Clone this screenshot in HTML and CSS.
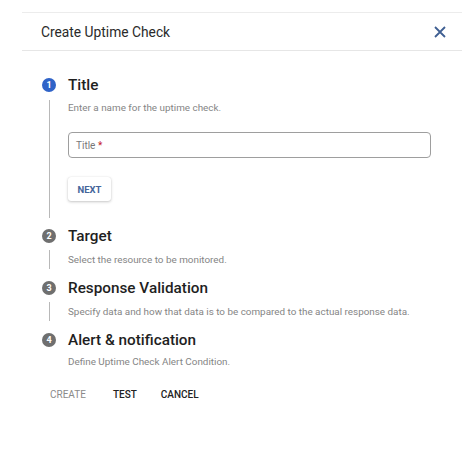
FILE: index.html
```html
<!DOCTYPE html>
<html>
<head>
<meta charset="utf-8">
<link rel="stylesheet" href="styles.css">
</head>
<body>
<div class="dialog">
  <div class="header">
    <span class="header-title">Create Uptime Check</span>
    <svg class="close" width="12" height="12" viewBox="0 0 12 12"><path d="M1 1L11 11M11 1L1 11" stroke="#3f5f92" stroke-width="1.8" fill="none"/></svg>
  </div>
  <div class="steps">
    <div class="step">
      <div class="step-head"><span class="num active">1</span><span class="step-title">Title</span></div>
      <div class="step-body line first">
        <div class="desc">Enter a name for the uptime check.</div>
        <div class="field"><span class="label">Title <span class="req">*</span></span></div>
        <button class="next">NEXT</button>
      </div>
    </div>
    <div class="step">
      <div class="step-head"><span class="num">2</span><span class="step-title">Target</span></div>
      <div class="step-body line"><div class="desc">Select the resource to be monitored.</div></div>
    </div>
    <div class="step">
      <div class="step-head"><span class="num">3</span><span class="step-title">Response Validation</span></div>
      <div class="step-body line"><div class="desc">Specify data and how that data is to be compared to the actual response data.</div></div>
    </div>
    <div class="step">
      <div class="step-head"><span class="num">4</span><span class="step-title">Alert &amp; notification</span></div>
      <div class="step-body last"><div class="desc">Define Uptime Check Alert Condition.</div></div>
    </div>
  </div>
  <div class="actions">
    <span class="btn disabled">CREATE</span>
    <span class="btn">TEST</span>
    <span class="btn">CANCEL</span>
  </div>
</div>
</body>
</html>
```
FILE: styles.css
```css
html, body { margin: 0; padding: 0; background: #fff; }
body { font-family: Roboto, "Liberation Sans", sans-serif; color: #202124; }
.dialog { margin: 12px 0 0 22px; width: 440px; }
.header {
  height: 37px;
  border-top: 1px solid #ececec;
  border-bottom: 1px solid #e6e6e6;
  display: flex; align-items: center; justify-content: space-between;
  padding: 0 16px 0 19px;
}
.header-title { font-size: 13.8px; color: #2a2a2a; }
.close { display: block; }
.steps { padding: 24px 0 0 20px; }
.step-head { display: flex; align-items: center; height: 20px; gap: 12px; }
.num {
  width: 14px; height: 14px; border-radius: 50%;
  background: #6f6f6f; color: #fff;
  font-size: 9px; font-weight: 700;
  display: flex; align-items: center; justify-content: center;
}
.num.active { background: #2f63c8; }
.step-title { font-size: 15.3px; font-weight: 500; color: #1f1f1f; }
.step-body { margin-left: 7px; padding-left: 18px; }
.step-body.line { border-left: 1px solid #b8b8b8; margin-top: 4px; margin-bottom: 9px; height: 19px; display: flex; flex-direction: column; justify-content: center; }
.step-body.line.first { height: auto; display: block; padding-top: 1px; padding-bottom: 17px; margin-top: 5px; margin-bottom: 8px; }
.step-body.last { margin-left: 8px; margin-top: 5px; }
.desc { font-size: 9.9px; color: #858585; line-height: 14px; }
.field {
  margin-top: 17px; height: 24px; width: 354px;
  border: 1px solid #9e9e9e; border-radius: 4px;
  display: flex; align-items: center; padding-left: 7px;
}
.label { font-size: 10px; color: #777; }
.req { color: #c5221f; }
.next {
  margin-top: 19px; height: 24px; width: 43px; padding: 0;
  border: none; background: #fff; border-radius: 3px;
  box-shadow: 0 1px 3px rgba(0,0,0,0.22), 0 0 1px rgba(0,0,0,0.12);
  font-family: Roboto, "Liberation Sans", sans-serif;
  font-size: 9.5px; font-weight: 700; color: #44659a;
  display: block;
}
.actions { display: flex; align-items: center; margin: 19px 0 0 28px; gap: 27px; }
.btn { font-size: 10px; font-weight: 500; color: #222; line-height: 14px; }
.btn.disabled { color: #8a8a8a; font-weight: 400; }
.btn + .btn + .btn { margin-left: -3px; }
```
